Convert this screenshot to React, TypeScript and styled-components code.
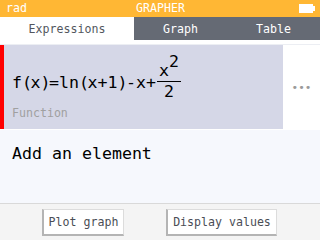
import React from "react";
import styled, { createGlobalStyle } from "styled-components";

const Global = createGlobalStyle`
  html, body { margin: 0; padding: 0; }
  body { width: 320px; height: 240px; overflow: hidden; background: #fff; }
  * { box-sizing: border-box; }
`;

const MONO = `"DejaVu Sans Mono", "Liberation Mono", monospace`;

const Screen = styled.div`
  width: 320px;
  height: 240px;
  display: flex;
  flex-direction: column;
  font-family: ${MONO};
  background: #fff;
`;

const TitleBar = styled.div`
  height: 17px;
  background: #ffb734;
  display: grid;
  grid-template-columns: 1fr auto 1fr;
  align-items: center;
  padding: 0 5px 0 6px;
  color: #fff;
  font-size: 11.6px;
  line-height: 17px;
`;

const TitleRight = styled.div`
  display: flex;
  justify-content: flex-end;
`;

const Tabs = styled.div`
  height: 23px;
  display: flex;
  background: #656a74;
`;

const Tab = styled.div<{ $w: number; $active?: boolean }>`
  width: ${(p) => p.$w}px;
  display: flex;
  align-items: center;
  justify-content: center;
  font-size: 11.6px;
  color: ${(p) => (p.$active ? "#52565e" : "#fff")};
  background: ${(p) => (p.$active ? "#fff" : "transparent")};
`;

const Gap = styled.div`
  height: 5px;
  background: #fff;
  border-bottom: 1px solid #eceef3;
`;

const List = styled.div`
  flex: 1;
  background: #f6f8fd;
  display: flex;
  flex-direction: column;
`;

const FuncRow = styled.div`
  height: 85px;
  display: flex;
  border-bottom: 1px solid #fff;
`;

const ColorBar = styled.div`
  width: 4px;
  background: #ff0000;
`;

const FuncBody = styled.div`
  flex: 1;
  background: #d5d7e7;
  display: flex;
  flex-direction: column;
  padding: 11px 0 0 8px;
`;

const Formula = styled.div`
  height: 52px;
  display: flex;
  align-items: center;
  font-size: 16.6px;
  color: #000;
  white-space: pre;
`;

const Paren = styled.span`
  letter-spacing: -1.5px;
`;

const Frac = styled.span`
  display: inline-flex;
  flex-direction: column;
  align-items: center;
  margin-left: 1px;
  transform: translateY(-1px);
`;

const Num = styled.span`
  display: inline-flex;
  align-items: flex-start;
  padding: 0 2px 1px;
  border-bottom: 1px solid #000;
  line-height: 18px;
`;

const Sup = styled.span`
  font-size: 16.6px;
  line-height: 16px;
  margin-top: -8px;
`;

const Den = styled.span`
  line-height: 18px;
  padding-top: 1px;
`;

const Label = styled.div`
  font-size: 11.6px;
  color: #a0a0a0;
  margin-top: -2px;
`;

const More = styled.div`
  width: 37px;
  background: #fff;
  display: flex;
  align-items: center;
  justify-content: center;
  color: #9a9a9a;
  font-size: 11px;
`;

const AddRow = styled.div`
  height: 46px;
  display: flex;
  align-items: center;
  padding-left: 12px;
  font-size: 16.6px;
  color: #000;
`;

const Footer = styled.div`
  height: 37px;
  background: #f4f4f4;
  border-top: 1px solid #d9d9d9;
  display: flex;
  align-items: flex-start;
  padding-top: 5px;
`;

const Button = styled.div<{ $left: number; $w: number }>`
  margin-left: ${(p) => p.$left}px;
  width: ${(p) => p.$w}px;
  height: 27px;
  background: #fff;
  border: 1px solid #dcdcdc;
  border-left: 2px solid #b4b4b4;
  border-bottom: 2px solid #b4b4b4;
  display: flex;
  align-items: center;
  justify-content: center;
  font-size: 11.6px;
  color: #4a4d55;
`;

const Battery = () => (
  <svg width="16" height="9" viewBox="0 0 16 9">
    <rect x="0" y="0" width="14" height="9" fill="#fff" />
    <rect x="14" y="2" width="2" height="5" fill="#fff" />
  </svg>
);

export default function App() {
  return (
    <Screen>
      <Global />
      <TitleBar>
        <span>rad</span>
        <span>GRAPHER</span>
        <TitleRight>
          <Battery />
        </TitleRight>
      </TitleBar>
      <Tabs>
        <Tab $w={134} $active>
          Expressions
        </Tab>
        <Tab $w={93}>Graph</Tab>
        <Tab $w={93}>Table</Tab>
      </Tabs>
      <Gap />
      <List>
        <FuncRow>
          <ColorBar />
          <FuncBody>
            <Formula>
              <span>f</span>
              <Paren>(</Paren>
              <span>x</span>
              <Paren>)</Paren>
              <span>=ln</span>
              <Paren>(</Paren>
              <span>x+1</span>
              <Paren>)</Paren>
              <span>-x+</span>
              <Frac>
                <Num>
                  <span>x</span>
                  <Sup>2</Sup>
                </Num>
                <Den>2</Den>
              </Frac>
            </Formula>
            <Label>Function</Label>
          </FuncBody>
          <More>•••</More>
        </FuncRow>
        <AddRow>Add an element</AddRow>
      </List>
      <Footer>
        <Button $left={42} $w={82}>
          Plot graph
        </Button>
        <Button $left={42} $w={111}>
          Display values
        </Button>
      </Footer>
    </Screen>
  );
}
